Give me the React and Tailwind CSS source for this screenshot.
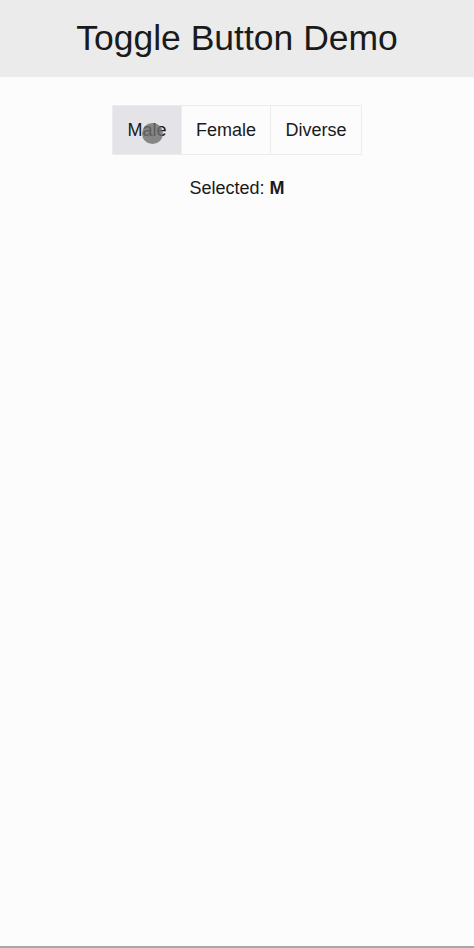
import { useState } from 'react'

const options = [
  { key: 'M', label: 'Male', w: 'w-[70px]' },
  { key: 'F', label: 'Female', w: 'w-[90px]' },
  { key: 'D', label: 'Diverse', w: 'w-[92px]' },
]

export default function App() {
  const [selected, setSelected] = useState('M')

  return (
    <div className="min-h-[948px] bg-[#fcfcfc] flex flex-col border-b-2 border-[#a8a8a8] font-['Liberation_Sans',Arial,sans-serif] text-[#1a1a1a]">
      <header className="h-[77px] bg-[#ebebeb] flex items-center justify-center">
        <h1 className="text-[35.5px] leading-none">Toggle Button Demo</h1>
      </header>
      <div className="flex justify-center mt-[28px]">
        <div className="flex">
          {options.map(o => (
            <button
              key={o.key}
              onClick={() => setSelected(o.key)}
              className={`${o.w} h-[50px] relative flex items-center justify-center text-[18px] border border-[#ececec] -ml-px first:ml-0 ${selected === o.key ? 'bg-[#e4e4e8]' : 'bg-[#fcfcfc]'}`}
            >
              {o.label}
              {selected === o.key && (
                <span className="absolute left-[29px] top-[17px] w-[21px] h-[21px] rounded-full bg-[#6e6e6e]/80" />
              )}
            </button>
          ))}
        </div>
      </div>
      <p className="text-center text-[18px] mt-[20px]">
        Selected: <span className="font-bold">{selected}</span>
      </p>
    </div>
  )
}
